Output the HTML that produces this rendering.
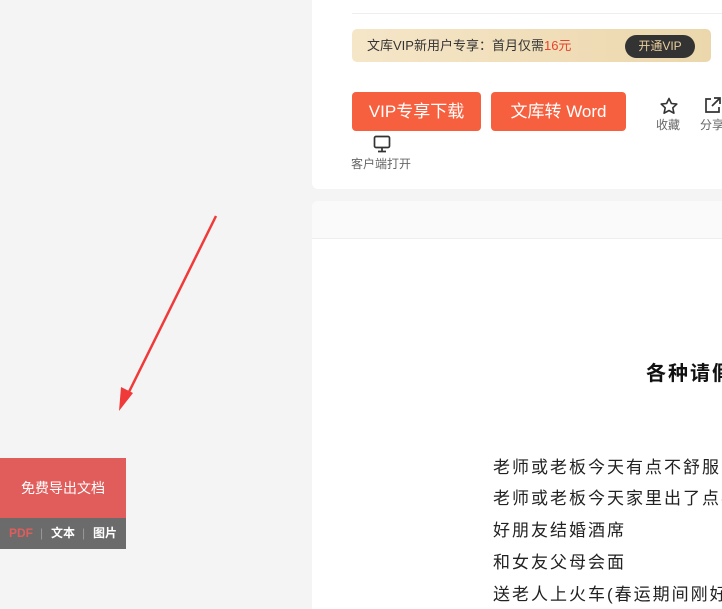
<!DOCTYPE html>
<html><head><meta charset="utf-8"><style>
*{margin:0;padding:0;box-sizing:border-box}
body{width:722px;height:609px;overflow:hidden;background:#f4f4f4;position:relative;font-family:"Liberation Sans","Noto Sans CJK SC",sans-serif}
.abs{position:absolute}
.card1{left:312px;top:0;width:420px;height:189px;background:#fff;border-radius:0 0 0 6px}
.card2{left:312px;top:201px;width:420px;height:408px;background:#fff;border-radius:6px 0 0 0}
.line{left:352px;top:13px;width:370px;height:1px;background:#eee}
.vip{left:352px;top:29px;width:359px;height:33px;background:linear-gradient(90deg,#f5e6c8,#ecd7ac);border-radius:5px;font-size:13px;color:#333;line-height:33px;padding-left:15px;white-space:nowrap}
.vip span{color:#e8432e}
.open{left:625px;top:35px;width:70px;height:23px;background:#333;border-radius:12px;color:#e9cf9c;font-size:12px;line-height:23px;text-align:center}
.btn{top:92px;height:39px;background:#f7603f;border-radius:4px;color:#fff;font-size:17px;line-height:39px;text-align:center}
.small{font-size:12px;color:#666;white-space:nowrap}
.txt{left:493px;font-size:17px;letter-spacing:2px;color:#222;line-height:20px;white-space:nowrap}
</style></head><body>
<div class="abs card1"></div>
<div class="abs line"></div>
<div class="abs vip">文库VIP新用户专享：首月仅需<span>16元</span></div>
<div class="abs open">开通VIP</div>
<div class="abs btn" style="left:352px;width:129px">VIP专享下载</div>
<div class="abs btn" style="left:491px;width:135px">文库转 Word</div>
<svg class="abs" style="left:659px;top:97px" width="20" height="18" viewBox="0 0 20 18"><path d="M10 1.5l2.4 5 5.4.6-4 3.7 1.1 5.4L10 13.5l-4.9 2.7 1.1-5.4-4-3.7 5.4-.6z" fill="none" stroke="#333" stroke-width="1.6" stroke-linejoin="round"/></svg>
<div class="abs small" style="left:656px;top:116px">收藏</div>
<svg class="abs" style="left:703px;top:96px" width="19" height="18" viewBox="0 0 19 18"><path d="M8 3H3v13h13v-5M11 2h6v6M17 2l-8 8" fill="none" stroke="#333" stroke-width="1.7"/></svg>
<div class="abs small" style="left:700px;top:116px">分享</div>
<svg class="abs" style="left:373px;top:135px" width="18" height="18" viewBox="0 0 18 18"><rect x="1.5" y="1.5" width="15" height="11" rx="1.5" fill="none" stroke="#333" stroke-width="1.7"/><path d="M9 13v3M5 16.5h8" stroke="#333" stroke-width="1.7"/></svg>
<div class="abs small" style="left:351px;top:155px">客户端打开</div>
<div class="abs card2"></div>
<div class="abs" style="left:312px;top:201px;width:410px;height:38px;background:#fafafa;border-bottom:1px solid #eee;border-radius:6px 0 0 0"></div>
<div class="abs" style="left:646px;top:357px;font-size:20px;letter-spacing:2px;font-weight:bold;color:#111;white-space:nowrap">各种请假</div>
<div class="abs txt" style="top:458px">老师或老板今天有点不舒服</div>
<div class="abs txt" style="top:489px">老师或老板今天家里出了点事</div>
<div class="abs txt" style="top:521px">好朋友结婚酒席</div>
<div class="abs txt" style="top:553px">和女友父母会面</div>
<div class="abs txt" style="top:585px">送老人上火车(春运期间刚好</div>
<svg class="abs" style="left:0;top:0" width="312" height="609"><path d="M216 216L126 398" stroke="#f03a3a" stroke-width="2.5"/><path d="M119 411l2-24 12 6z" fill="#f03a3a"/></svg>
<div class="abs" style="left:0;top:458px;width:126px;height:60px;background:#e05d5b;color:#fff;font-size:14px;line-height:60px;text-align:center">免费导出文档</div>
<div class="abs" style="left:0;top:518px;width:126px;height:31px;background:#6b6b6b;color:#fff;font-size:12px;font-weight:bold;line-height:31px;white-space:nowrap">
<span class="abs" style="left:9px;color:#e05d5b">PDF</span><span class="abs" style="left:40px;color:#999;font-weight:normal">|</span><span class="abs" style="left:51px">文本</span><span class="abs" style="left:82px;color:#999;font-weight:normal">|</span><span class="abs" style="left:93px">图片</span></div>
</body></html>
